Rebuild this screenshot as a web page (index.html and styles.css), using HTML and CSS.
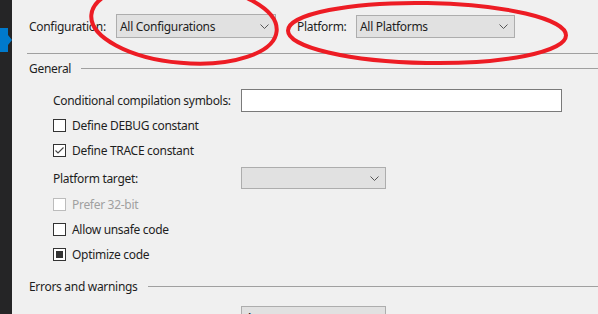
FILE: index.html
```html
<!DOCTYPE html>
<html lang="en">
<head>
    <meta charset="UTF-8">
    <title>Build</title>
    <link rel="stylesheet" href="styles.css">
</head>
<body>
    <div class="sidebar">
        <svg class="tab-marker" width="12" height="314" viewBox="0 0 12 314">
            <polygon points="0,28 8,28 8,35 12,40 8,45 8,52 0,52" fill="#007acc"/>
        </svg>
    </div>
    <div class="page">
        <div class="config-bar">
            <span class="bar-label label-config">Configuration:</span>
            <div class="combo combo-config">
                <span>All Configurations</span>
                <svg class="chevron" width="9" height="5" viewBox="0 0 9 5"><polyline points="0.5,0.5 4.5,4.5 8.5,0.5" fill="none" stroke="#555" stroke-width="1"/></svg>
            </div>
            <span class="bar-label label-platform">Platform:</span>
            <div class="combo combo-platform">
                <span>All Platforms</span>
                <svg class="chevron" width="9" height="5" viewBox="0 0 9 5"><polyline points="0.5,0.5 4.5,4.5 8.5,0.5" fill="none" stroke="#555" stroke-width="1"/></svg>
            </div>
        </div>

        <div class="section-title general"><span>General</span><div class="rule"></div></div>

        <div class="form">
            <div class="row row-symbols">
                <label class="field-label">Conditional compilation symbols:</label>
                <div class="textbox"></div>
            </div>
            <div class="row check-row row-debug">
                <span class="box"></span><span>Define DEBUG constant</span>
            </div>
            <div class="row check-row">
                <span class="box">
                    <svg width="11" height="11" viewBox="0 0 11 11"><polyline points="1.5,5.5 4,8 9.5,2.5" fill="none" stroke="#444" stroke-width="1.1"/></svg>
                </span><span>Define TRACE constant</span>
            </div>
            <div class="row row-target">
                <label class="field-label">Platform target:</label>
                <div class="combo combo-target">
                    <span></span>
                    <svg class="chevron" width="9" height="5" viewBox="0 0 9 5"><polyline points="0.5,0.5 4.5,4.5 8.5,0.5" fill="none" stroke="#555" stroke-width="1"/></svg>
                </div>
            </div>
            <div class="row check-row disabled row-prefer">
                <span class="box"></span><span>Prefer 32-bit</span>
            </div>
            <div class="row check-row">
                <span class="box"></span><span>Allow unsafe code</span>
            </div>
            <div class="row check-row">
                <span class="box"><span class="fill"></span></span><span>Optimize code</span>
            </div>
        </div>

        <div class="section-title errors"><span>Errors and warnings</span><div class="rule"></div></div>

        <div class="form">
            <div class="row row-warning">
                <label class="field-label">Warning level:</label>
                <div class="combo combo-target"><span>4</span></div>
            </div>
        </div>
    </div>

    <svg class="annotations" width="598" height="314" viewBox="0 0 598 314">
        <ellipse cx="184" cy="23" rx="93" ry="40" transform="rotate(5 184 23)" fill="none" stroke="#ed1c24" stroke-width="4"/>
        <ellipse cx="427" cy="33" rx="139" ry="30" transform="rotate(1 427 33)" fill="none" stroke="#ed1c24" stroke-width="4"/>
    </svg>
</body>
</html>
```

FILE: styles.css
```css
html, body {
    margin: 0;
    padding: 0;
    height: 100%;
}
body {
    display: flex;
    background-color: #f0f0f0;
    font-family: "Noto Sans", "Open Sans", sans-serif;
    font-size: 12px;
    letter-spacing: -0.3px;
    color: #1e1e1e;
    overflow: hidden;
    position: relative;
}
.sidebar {
    width: 12px;
    flex-shrink: 0;
    background-color: #252526;
}
.tab-marker {
    display: block;
}
.page {
    flex: 1;
    padding-left: 15px;
}
.config-bar {
    display: flex;
    align-items: center;
    height: 54px;
    border-bottom: 1px solid #a0a0a0;
    padding-left: 2px;
    padding-bottom: 1px;
    box-sizing: border-box;
}
.bar-label {
    flex-shrink: 0;
}
.label-config {
    width: 87px;
}
.label-platform {
    margin-left: 21px;
    width: 59px;
}
.combo {
    display: flex;
    align-items: center;
    justify-content: space-between;
    box-sizing: border-box;
    background-color: #e1e1e1;
    border: 1px solid #adadad;
    padding: 0 6px 0 3px;
    flex-shrink: 0;
}
.combo-config {
    width: 160px;
    height: 24px;
}
.combo-platform {
    width: 159px;
    height: 23px;
}
.chevron {
    display: block;
}
.section-title {
    display: flex;
    align-items: center;
    padding-left: 2px;
}
.section-title .rule {
    flex: 1;
    height: 1px;
    background-color: #a0a0a0;
    margin-left: 10px;
}
.general {
    height: 28px;
}
.errors {
    height: 26px;
    margin-top: 6px;
}
.form {
    padding-left: 26px;
}
.row {
    display: flex;
    align-items: center;
}
.field-label {
    width: 188px;
    flex-shrink: 0;
}
.row-symbols {
    height: 24px;
    margin-top: 6px;
}
.textbox {
    width: 321px;
    height: 23px;
    box-sizing: border-box;
    background-color: #fff;
    border: 1px solid #7a7a7a;
}
.check-row {
    height: 25px;
}
.row-debug {
    margin-top: 1px;
}
.box {
    width: 13px;
    height: 13px;
    box-sizing: border-box;
    border: 1px solid #333;
    background-color: #fff;
    margin-right: 6px;
    display: flex;
    align-items: center;
    justify-content: center;
}
.box svg {
    display: block;
}
.box .fill {
    width: 7px;
    height: 7px;
    background-color: #333;
}
.disabled {
    color: #a0a0a0;
}
.disabled .box {
    border-color: #bcbcbc;
}
.row-target {
    height: 24px;
    margin-top: 3px;
}
.combo-target {
    width: 145px;
    height: 22px;
}
.row-prefer {
    margin-top: 2px;
}
.row-warning {
    height: 24px;
    margin-top: 7px;
    align-items: flex-start;
}
.row-warning .field-label {
    padding-top: 5px;
}
.annotations {
    position: absolute;
    left: 0;
    top: 0;
    pointer-events: none;
}
```
